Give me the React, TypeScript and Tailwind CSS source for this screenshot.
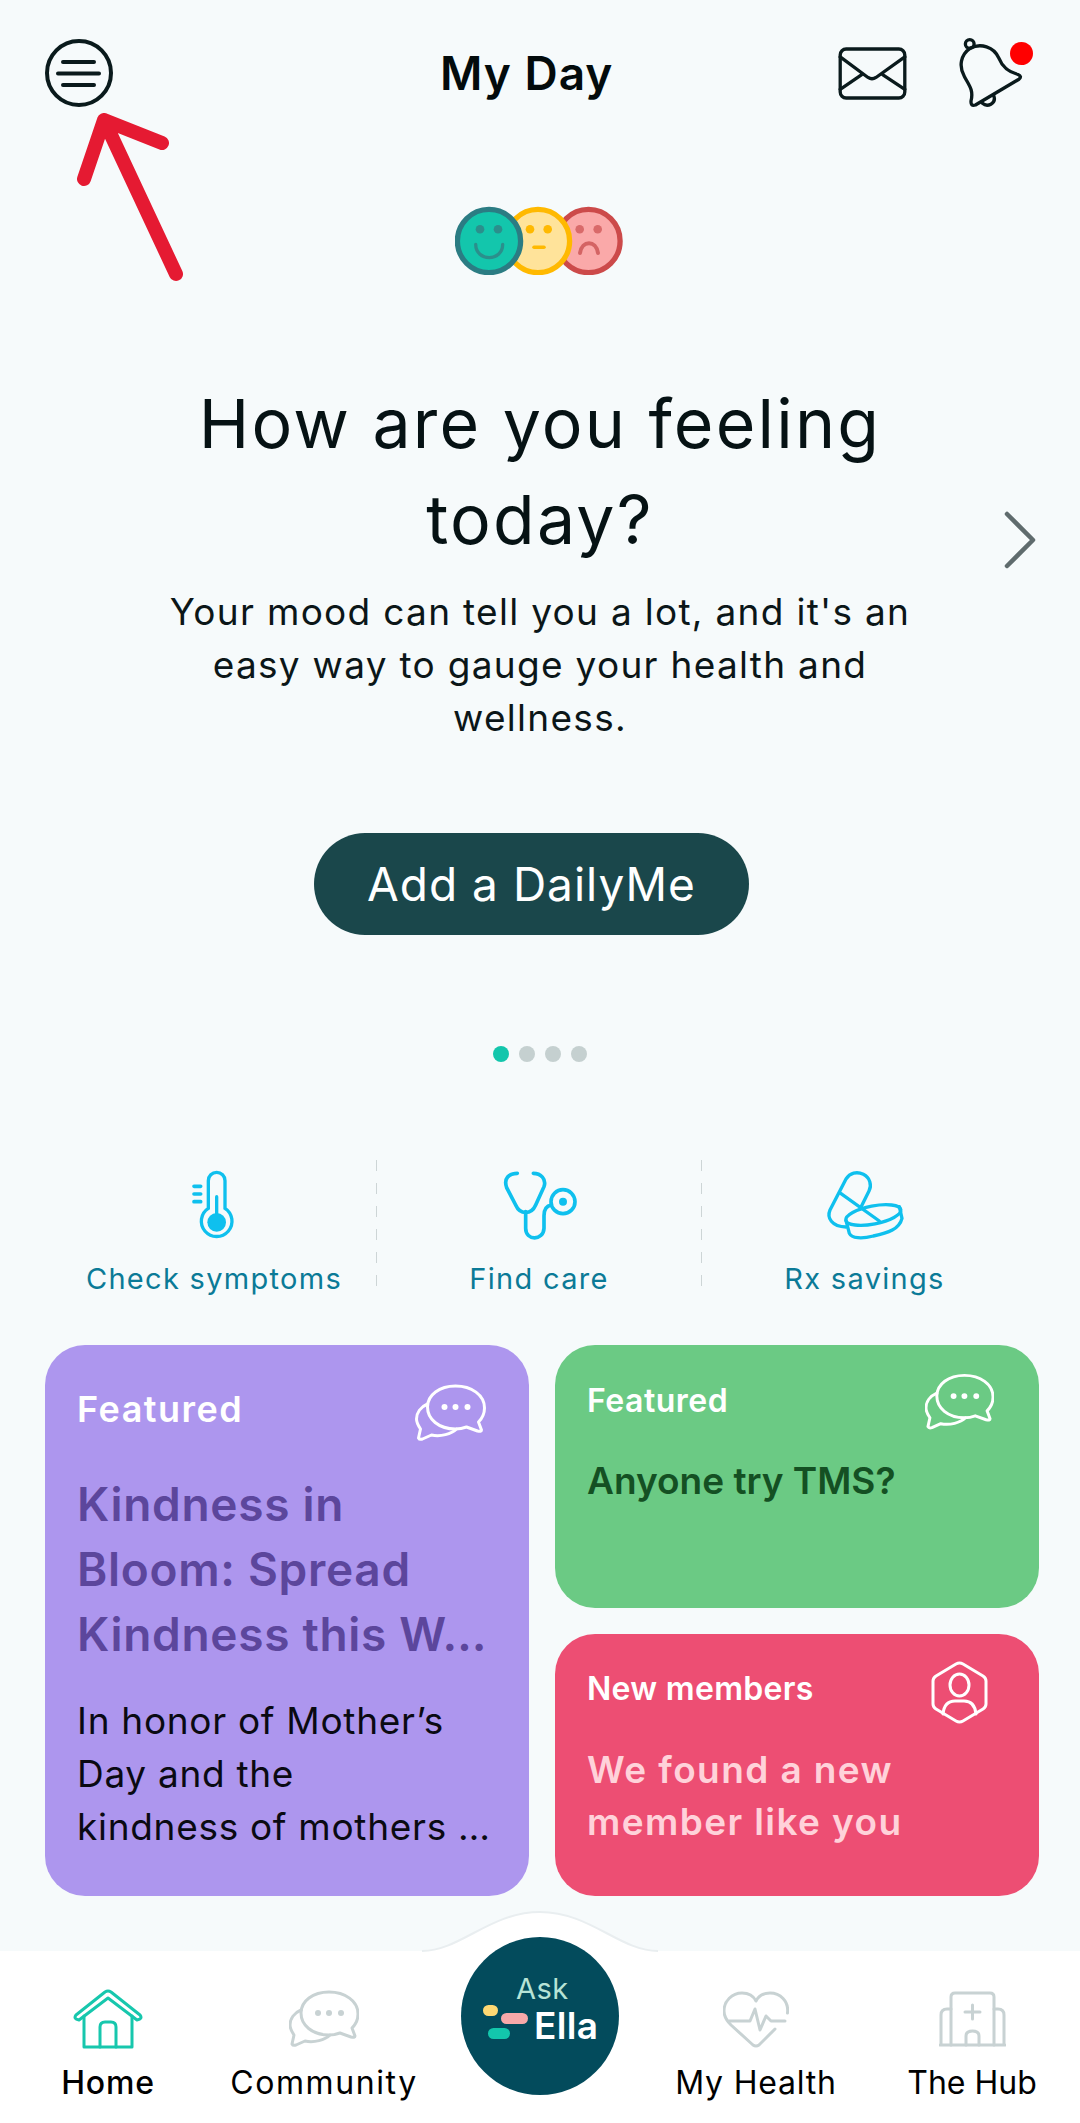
import React from "react";

const FONT = "font-['Inter','Liberation_Sans',sans-serif]";

function ChatIcon({ color, className }: { color: string; className: string }) {
  return (
    <svg viewBox="0 0 70 58" className={className} fill="none" stroke={color} strokeWidth="3" strokeLinejoin="round" strokeLinecap="round">
      <path d="M40 2C56 2 69 11 69 24C69 30 66 35 63 38L66 46Q66 48 62 47L51 43C47 44.5 43 45 40 45C23 45 12 35 12 23C12 11 24 2 40 2Z" />
      <path d="M12 20C5 23 1 29 1 35C1 39 3 42 5 45L3 54Q4 56 7 55L16 51C25 53 36 50 41 45" />
      <circle cx="29" cy="23" r="3" fill={color} stroke="none" />
      <circle cx="40" cy="23" r="3" fill={color} stroke="none" />
      <circle cx="52" cy="23" r="3" fill={color} stroke="none" />
    </svg>
  );
}

function MoodFaces() {
  return (
    <svg viewBox="0 0 170 69" className="w-[170px] h-[69px]" fill="none" strokeLinecap="round">
      <circle cx="133.500" cy="35" r="31.600" fill="#faa9a9" stroke="#cc4a4a" strokeWidth="5.300" />
      <circle cx="124.700" cy="23.300" r="4.300" fill="#d96a6a" />
      <circle cx="142.700" cy="23.300" r="4.300" fill="#d96a6a" />
      <path d="M125 47C127 34 141 34 143 47" stroke="#d46464" strokeWidth="4" />
      <circle cx="83" cy="35" r="31.600" fill="#ffe39a" stroke="#ffb900" strokeWidth="5.300" />
      <circle cx="75" cy="23.300" r="4.300" fill="#ffb900" />
      <circle cx="92.700" cy="23.300" r="4.300" fill="#ffb900" />
      <path d="M79 41.300H89" stroke="#ffb900" strokeWidth="3.500" />
      <circle cx="34" cy="35" r="31.600" fill="#13c6ac" stroke="#2b7c83" strokeWidth="5.300" />
      <circle cx="25" cy="23.300" r="4.300" fill="#2b8f8c" />
      <circle cx="43" cy="23.300" r="4.300" fill="#2b8f8c" />
      <path d="M20.700 38.300C20.700 56 47.700 56 47.700 38.300" stroke="#2b8f8c" strokeWidth="3.300" />
    </svg>
  );
}

function Thermometer() {
  return (
    <svg viewBox="0 0 270 240" className="w-[90px] h-[80px] ml-[21px]" fill="none" stroke="#0fc0ee" strokeWidth="10" strokeLinecap="round">
      <path d="M85 130V47A25 25 0 0 1 135 47V130A46 46 0 1 1 85 130Z" />
      <path d="M110 95V150" />
      <circle cx="110" cy="172" r="28" fill="#0fc0ee" stroke="none" />
      <path d="M42 64H62M42 87H62M42 110H62" strokeWidth="11" />
    </svg>
  );
}

function Stethoscope() {
  return (
    <svg viewBox="0 0 270 240" className="w-[90px] h-[80px]" fill="none" stroke="#0fc0ee" strokeWidth="11" strokeLinecap="round">
      <path d="M70 25C45 25 28 40 38 68L65 120C78 150 112 150 125 120L150 65C158 42 140 25 118 25" />
      <path d="M95 140V190C95 228 148 228 150 190V152C150 130 160 122 172 120" />
      <circle cx="207" cy="110" r="36" />
      <circle cx="207" cy="110" r="12" fill="#0fc0ee" stroke="none" />
    </svg>
  );
}

function Pills() {
  return (
    <svg viewBox="0 0 270 240" className="w-[90px] h-[80px]" fill="none" stroke="#0fc0ee" strokeWidth="10" strokeLinecap="round" strokeLinejoin="round">
      <path d="M122 128L147 78C156 60 150 38 130 28C110 18 90 24 78 42L30 135C20 158 35 185 78 186" />
      <path d="M62 85L178 168" />
      <ellipse cx="160" cy="150" rx="84" ry="27" transform="rotate(-11 160 150)" />
      <path d="M78 166L88 205C95 220 125 222 160 213C205 204 238 192 246 160L238 125" />
    </svg>
  );
}

function Home() {
  return (
    <svg viewBox="0 0 70 60" className="w-[70px] h-[60px]" fill="none" stroke="#17c7ad" strokeWidth="3" strokeLinecap="round" strokeLinejoin="round">
      <path d="M3 26L32 3Q35 1 38 3L67 26Q70 30 64 31L35 9L6 31Q0 30 3 26Z" />
      <path d="M11 27V58H59V27" />
      <path d="M27 58V38Q27 33 32 33H38Q43 33 43 38V58" />
    </svg>
  );
}

function Heart() {
  return (
    <svg viewBox="0 0 66 57" className="w-[66px] h-[57px]" fill="none" stroke="#c8d2d3" strokeWidth="3" strokeLinecap="round" strokeLinejoin="round">
      <path d="M64.500 22C66 10 57 2 47 2C41 2 36 4 33 10C30 4 25 2 19 2C9 2 1 10 1 20C1 26 4 30 8 34L30 54Q33 56 36 54L52 38" />
      <path d="M6 30H27L32 18L37 39L43 25L48 30H62" />
    </svg>
  );
}

function Hub() {
  return (
    <svg viewBox="0 0 67 56" className="w-[67px] h-[56px]" fill="none" stroke="#c8d2d3" strokeWidth="3" strokeLinecap="round" strokeLinejoin="round">
      <path d="M1 54H66M2 54V24Q2 18 8 18H12M65 54V24Q65 18 59 18H55" />
      <path d="M12 54V6Q12 2 16 2H51Q55 2 55 6V54" />
      <path d="M27 54V45Q27 40 33.500 40Q40 40 40 45V54" />
      <path d="M33.500 14V28M26 21H41" />
    </svg>
  );
}

function NavItem({ label, className, icon }: { label: string; className: string; icon: React.ReactNode }) {
  return (
    <div className="flex flex-col items-center">
      <div className="h-[60px] flex items-center justify-center">{icon}</div>
      <span className={`mt-[14px] text-[32px] leading-[40px] text-black whitespace-nowrap ${className}`}>{label}</span>
    </div>
  );
}

function Shortcut({ label, icon }: { label: string; icon: React.ReactNode }) {
  return (
    <div className="flex flex-col items-center pt-[5px]">
      {icon}
      <span className="mt-[14px] text-[29px] leading-[40px] text-[#0b7a97] tracking-[1.3px] whitespace-nowrap">{label}</span>
    </div>
  );
}

const dashes = "w-px h-[134px] bg-[repeating-linear-gradient(to_bottom,#cdd5d6_0px,#cdd5d6_11px,transparent_11px,transparent_23px)]";

export default function App() {
  return (
    <div className={`relative w-[1080px] h-[2123px] overflow-hidden bg-[#f6fafb] flex flex-col ${FONT}`}>
      <main className="flex-1 flex flex-col">
        {/* top bar */}
        <header className="pt-[39px] pl-[45px] pr-[47px] flex items-center h-[107px]">
          <svg viewBox="0 0 68 68" className="w-[68px] h-[68px]" fill="none" stroke="#0a1a1c" strokeWidth="4" strokeLinecap="round">
            <circle cx="34" cy="34" r="32" />
            <path d="M18 23H49M13 34.500H54M18 46H49" />
          </svg>
          <h1 className="ml-[327px] text-[46px] leading-[68px] font-semibold text-[#030b0c] tracking-[1px]">My Day</h1>
          <div className="ml-auto flex items-center gap-[50px]">
            <svg viewBox="175 140 207 160" className="w-[69px] h-[53px]" fill="none" stroke="#0a1a1c" strokeWidth="10" strokeLinecap="round" strokeLinejoin="round">
              <rect x="181" y="146" width="195" height="148" rx="18" />
              <path d="M181 170L265 232Q277 240 289 232L376 170M181 268L245 224M376 268L310 224" />
            </svg>
            <div className="relative w-[76px] h-[68px]">
              <svg viewBox="530 112 200 212" className="absolute left-0 top-[-2px] w-[67px] h-[71px]" fill="none" stroke="#0a1a1c" strokeWidth="10" strokeLinecap="round" strokeLinejoin="round">
                <circle cx="568" cy="133" r="13" />
                <path d="M570 145C600 130 640 140 655 175C665 200 680 215 712 224Q725 230 715 238L585 315Q570 320 572 302C580 270 565 255 552 230C535 200 540 165 570 145Z" />
                <path d="M606 310C620 322 648 312 640 288" />
              </svg>
              <span className="absolute left-[53px] top-[3px] w-[23px] h-[23px] rounded-full bg-[#ff0000]" />
            </div>
          </div>
        </header>

        {/* mood carousel */}
        <section className="relative flex flex-col items-center">
          <div className="mt-[99px]"><MoodFaces /></div>
          <h2 className="mt-[100px] text-[68px] leading-[96px] font-normal text-center text-[#061214] tracking-[2.2px]">
            How are you feeling<br />today?
          </h2>
          <p className="mt-[18px] text-[37px] leading-[53px] text-center text-[#0b1618] tracking-[1.3px]">
            Your mood can tell you a lot, and it's an<br />easy way to gauge your health and<br />wellness.
          </p>
          <button className="mt-[89px] ml-[-17px] w-[435px] h-[102px] rounded-full bg-[#1a474b] text-white text-[46px] tracking-[1px]">
            Add a DailyMe
          </button>
          <div className="mt-[111px] flex gap-[10px]">
            <span className="w-[16px] h-[16px] rounded-full bg-[#13c6ac]" />
            <span className="w-[16px] h-[16px] rounded-full bg-[#c5d0d0]" />
            <span className="w-[16px] h-[16px] rounded-full bg-[#c5d0d0]" />
            <span className="w-[16px] h-[16px] rounded-full bg-[#c5d0d0]" />
          </div>
          <svg viewBox="0 0 32 58" className="absolute left-[1004px] top-[404px] w-[32px] h-[58px]" fill="none" stroke="#5f6b6d" strokeWidth="4.500" strokeLinecap="round" strokeLinejoin="round">
            <path d="M3 3L29 29L3 55" />
          </svg>
        </section>

        {/* shortcuts */}
        <section className="mt-[98px] ml-[52px] w-[975px] h-[140px] grid grid-cols-[324px_1px_324px_1px_325px]">
          <Shortcut label="Check symptoms" icon={<Thermometer />} />
          <div className={dashes} />
          <Shortcut label="Find care" icon={<Stethoscope />} />
          <div className={dashes} />
          <Shortcut label="Rx savings" icon={<Pills />} />
        </section>

        {/* feature cards */}
        <section className="mt-[45px] pl-[45px] pr-[41px] grid grid-cols-2 gap-x-[26px] h-[551px]">
          <article className="rounded-[40px] bg-[#ad96ee] pl-[32px] pr-[32px] pt-[39px]">
            <div className="flex items-start justify-between h-[68px]">
              <span className="text-[36px] leading-[50px] font-semibold text-white tracking-[1.5px]">Featured</span>
              <ChatIcon color="#ffffff" className="w-[71px] h-[58px] mr-[11px]" />
            </div>
            <h3 className="mt-[20px] text-[46px] leading-[65px] font-semibold text-[#5c469c] tracking-[0.7px] whitespace-nowrap">
              Kindness in<br />Bloom: Spread<br />Kindness this W…
            </h3>
            <p className="mt-[27px] text-[37px] leading-[53px] text-[#0a0a12] tracking-[0.7px] whitespace-nowrap">
              In honor of Mother’s<br />Day and the<br />kindness of mothers …
            </p>
          </article>
          <div className="flex flex-col gap-[26px]">
            <article className="h-[263px] rounded-[40px] bg-[#6bca84] pl-[32px] pr-[45px] pt-[28px]">
              <div className="flex items-start justify-between h-[68px]">
                <span className="mt-[5px] text-[32px] leading-[46px] font-semibold text-white tracking-[0.5px]">Featured</span>
                <ChatIcon color="#ffffff" className="w-[69px] h-[58px]" />
              </div>
              <h3 className="mt-[14px] text-[37px] leading-[52px] font-semibold text-[#145023]">Anyone try TMS?</h3>
            </article>
            <article className="flex-1 rounded-[40px] bg-[#ed4e73] pl-[32px] pr-[51px] pt-[27px]">
              <div className="flex items-start justify-between h-[68px]">
                <span className="mt-[5px] text-[32px] leading-[46px] font-semibold text-white tracking-[0.3px]">New members</span>
                <svg viewBox="0 0 57 63" className="w-[57px] h-[63px]" fill="none" stroke="#ffffff" strokeWidth="3" strokeLinecap="round" strokeLinejoin="round">
                  <path d="M25 3Q28.500 1 32 3L52 15Q55 17 55 20V43Q55 46 52 48L32 60Q28.500 62 25 60L5 48Q2 46 2 43V20Q2 17 5 15Z" />
                  <ellipse cx="28.500" cy="24" rx="9.500" ry="11" />
                  <path d="M12 53C13 43 18 40 24 40H33C39 40 44 43 45 53" />
                </svg>
              </div>
              <h3 className="mt-[15px] text-[37px] leading-[52px] font-semibold text-[#ffd2da] tracking-[1.4px] whitespace-nowrap">
                We found a new<br />member like you
              </h3>
            </article>
          </div>
        </section>
      </main>

      {/* bottom navigation */}
      <nav className="relative h-[172px] bg-white grid grid-cols-5 pt-[38px]">
        <svg viewBox="0 0 240 42" className="absolute left-[420px] top-[-41px] w-[240px] h-[42px]" fill="#ffffff" stroke="#e9eef0" strokeWidth="2">
          <path d="M2 41C40 41 70 2 120 2C170 2 200 41 238 41" />
        </svg>
        <NavItem label="Home" className="font-medium tracking-[0.8px]" icon={<Home />} />
        <NavItem label="Community" className="tracking-[1.6px]" icon={<ChatIcon color="#c8d2d3" className="w-[70px] h-[58px]" />} />
        <div />
        <NavItem label="My Health" className="tracking-[0.8px]" icon={<Heart />} />
        <NavItem label="The Hub" icon={<Hub />} />
        <div className="absolute left-[461px] top-[-14px] w-[158px] h-[158px] rounded-full bg-[#034b5c]">
          <span className="absolute left-[55px] top-[34px] text-[29px] leading-[36px] text-[#b7e3d6] tracking-[0.5px]">Ask</span>
          <span className="absolute left-[73px] top-[66px] text-[37px] leading-[46px] text-white font-semibold tracking-[0.3px]">Ella</span>
          <span className="absolute left-[22px] top-[68px] w-[15px] h-[11px] rounded-full bg-[#ffd873]" />
          <span className="absolute left-[40px] top-[76px] w-[27px] h-[11px] rounded-full bg-[#f8a9a9]" />
          <span className="absolute left-[27px] top-[91px] w-[22px] h-[11px] rounded-full bg-[#13c6ac]" />
        </div>
      </nav>

      {/* annotation arrow pointing at the menu button */}
      <svg viewBox="0 0 120 190" className="absolute left-[70px] top-[110px] w-[120px] h-[190px]" fill="none" stroke="#e51a32" strokeWidth="14" strokeLinecap="round" strokeLinejoin="round">
        <path d="M106 164L34 10M14 69L34 10L92 33" />
      </svg>
    </div>
  );
}
